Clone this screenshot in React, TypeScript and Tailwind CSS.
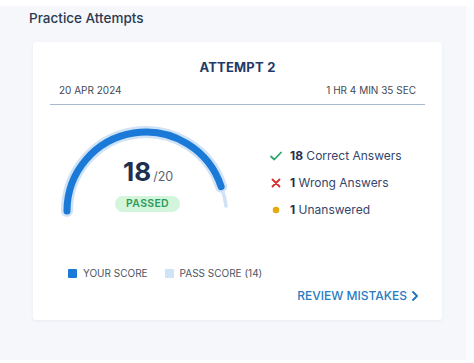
import React from "react";

function Gauge() {
  const cx = 146, cy = 210, r = 79;
  const angleEnd = Math.PI * (1 - 0.9);
  const ex = cx + r * Math.cos(angleEnd);
  const ey = cy - r * Math.sin(angleEnd);
  return (
    <svg width="180" height="110" viewBox="56 116 180 110" className="block">
      <path
        d={`M ${ex} ${ey} A ${r} ${r} 0 0 1 ${cx + r + 1} ${cy - 5}`}
        fill="none"
        stroke="#cfe2f6"
        strokeWidth="3.5"
        strokeLinecap="round"
      />
      <path
        d={`M ${cx - r} ${cy} A ${r} ${r} 0 0 1 ${ex} ${ey}`}
        fill="none"
        stroke="#cfe2f6"
        strokeWidth="12"
        strokeLinecap="round"
      />
      <path
        d={`M ${cx - r} ${cy} A ${r} ${r} 0 0 1 ${ex} ${ey}`}
        fill="none"
        stroke="#1b7ad7"
        strokeWidth="7"
        strokeLinecap="round"
      />
    </svg>
  );
}

export default function App() {
  return (
    <div
      className="w-[474px] h-[363px] bg-white overflow-hidden"
      style={{ fontFamily: "Inter, 'Noto Sans', sans-serif" }}
    >
      <div className="h-[6px] bg-white shadow-[0_1px_2px_rgba(0,0,0,0.06)]" />
      <div className="flex h-[354px]">
        <div className="w-[466px] bg-[#f5f7fb] pt-[3px] pl-[33px] pr-[24px]">
          <div className="-ml-[4px] text-[13.5px] font-medium text-[#2c3a50] leading-[18px]">
            Practice Attempts
          </div>
          <div className="mt-[15px] w-[409px] h-[278px] bg-white rounded-[3px] shadow-[0_1px_3px_rgba(30,50,90,0.06)] px-[17px] pt-[15px]">
            <div className="text-center text-[13px] font-bold text-[#1f3a68] tracking-[0.2px] leading-[20px]">
              ATTEMPT 2
            </div>
            <div className="flex justify-between px-[9px] mt-[6px] text-[10px] text-[#434a55] leading-[14px]">
              <span>20 APR 2024</span>
              <span>1 HR 4 MIN 35 SEC</span>
            </div>
            <div className="mt-[7px] h-px bg-[#a9b9cf]" />
            <div className="flex mt-[12px]">
              <div className="relative w-[200px] h-[110px] ml-[6px]">
                <Gauge />
                <div className="absolute left-[67px] top-[40px] flex items-baseline">
                  <span className="text-[26px] font-bold text-[#1e3050] leading-[30px]">18</span>
                  <span className="text-[12.5px] text-[#5b6472] ml-[2px]">/20</span>
                </div>
                <div className="absolute left-[59px] top-[79px] w-[65px] h-[16px] rounded-full bg-[#d3f5dc] text-[#2f9b5a] text-[10.5px] font-semibold flex items-center justify-center tracking-[0.3px]">
                  PASSED
                </div>
              </div>
              <div className="flex flex-col gap-[10px] ml-[13px] mt-[30px] text-[12px] text-[#34466a] leading-[17px]">
                <div className="flex items-center gap-[7px]">
                  <svg width="14" height="14" viewBox="0 0 14 14">
                    <path d="M2 7.5 L5.3 10.5 L12 3.5" fill="none" stroke="#2aa56b" strokeWidth="1.8" strokeLinecap="round" strokeLinejoin="round" />
                  </svg>
                  <span><b className="font-bold text-[#1f3050]">18</b> Correct Answers</span>
                </div>
                <div className="flex items-center gap-[7px]">
                  <svg width="14" height="14" viewBox="0 0 14 14">
                    <path d="M3.5 3.5 L10.5 10.5 M10.5 3.5 L3.5 10.5" fill="none" stroke="#d72d2d" strokeWidth="1.8" strokeLinecap="round" />
                  </svg>
                  <span><b className="font-bold text-[#1f3050]">1</b> Wrong Answers</span>
                </div>
                <div className="flex items-center gap-[7px]">
                  <svg width="14" height="14" viewBox="0 0 14 14">
                    <circle cx="7" cy="7" r="3.3" fill="#e2ac10" />
                  </svg>
                  <span><b className="font-bold text-[#1f3050]">1</b> Unanswered</span>
                </div>
              </div>
            </div>
            <div className="flex items-center mt-[39px] ml-[18px] text-[10px] text-[#4d5562] leading-[14px]">
              <span className="w-[9px] h-[9px] rounded-[1px] bg-[#1b7ad7] mr-[6px]" />
              <span>YOUR SCORE</span>
              <span className="w-[9px] h-[9px] rounded-[1px] bg-[#cfe3f7] ml-[17px] mr-[6px]" />
              <span>PASS SCORE (14)</span>
            </div>
            <div className="flex justify-end items-center mt-[8px] pr-[5px] text-[12px] font-medium text-[#2a7bc2] leading-[16px]">
              <span>REVIEW MISTAKES</span>
              <svg width="10" height="12" viewBox="0 0 10 12" className="ml-[3px]">
                <path d="M3 2 L7 6 L3 10" fill="none" stroke="#1f6fb5" strokeWidth="1.8" strokeLinecap="round" strokeLinejoin="round" />
              </svg>
            </div>
          </div>
        </div>
        <div className="flex-1 bg-[#fbfcfe]" />
      </div>
    </div>
  );
}
